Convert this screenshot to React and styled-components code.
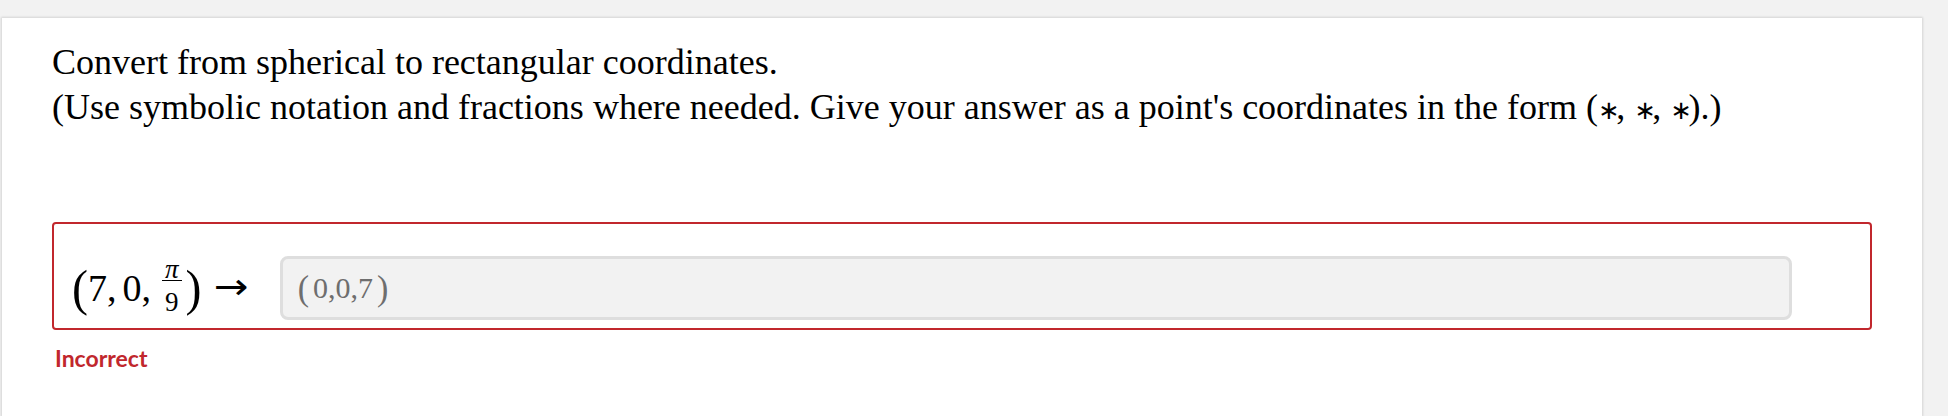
import React from 'react';
import styled, { createGlobalStyle } from 'styled-components';

const GlobalStyle = createGlobalStyle`
  html, body {
    margin: 0;
    padding: 0;
    background: #f2f2f2;
    height: 100%;
    overflow: hidden;
  }
`;

const PageSC = styled.div`
  padding-top: 18px;
  height: 416px;
  box-sizing: border-box;
  overflow: hidden;
`;

const CardSC = styled.div`
  margin: 0 26px 0 2px;
  height: 398px;
  background: #fff;
  box-shadow: 0 0 2px 1px rgba(0, 0, 0, 0.12);
  box-sizing: border-box;
  padding: 22px 50px 0 50px;
`;

const PromptSC = styled.p`
  margin: 0;
  font-family: "Liberation Serif", "Times New Roman", serif;
  font-size: 36px;
  line-height: 45px;
  color: #000;
`;

const StarSC = styled.span`
  display: inline-block;
  text-align: center;
  font-family: "DejaVu Sans", sans-serif;
  font-size: 0.72em;
  width: 0.7em;
  line-height: 1;
`;

const AnswerBoxSC = styled.div`
  margin-top: 92px;
  border: 2px solid #c1272d;
  border-radius: 4px;
  display: flex;
  align-items: center;
  padding: 32px 78px 8px 18px;
`;

const MathSC = styled.span`
  display: inline-flex;
  align-items: center;
  font-family: "Liberation Serif", "Times New Roman", serif;
  font-size: 38px;
  color: #000;
  margin-right: ${(props) => props.gap}px;
`;

const ParenSC = styled.span`
  font-size: ${(props) => props.size || 48}px;
  line-height: 1;
  display: inline-block;
  transform: scaleY(1.05);
  margin: ${(props) => props.gap || '0'};
`;

const TermSC = styled.span`
  margin-right: ${(props) => props.gap || 0}px;
`;

const FracSC = styled.span`
  display: inline-flex;
  flex-direction: column;
  align-items: center;
  font-size: 27px;
  padding: 0 1px;
  margin: 0 3px 0 6px;
  transform: translateY(-1px);

  .num {
    font-style: italic;
    line-height: 0.85;
    padding: 0 3px;
    border-bottom: 1.5px solid #000;
  }

  .den {
    line-height: 1;
    padding-top: 8px;
  }
`;

const ArrowSC = styled.span`
  display: inline-block;
  font-family: "DejaVu Sans", sans-serif;
  font-size: 36px;
  line-height: 1;
  margin-left: 14px;
  transform: translateY(-1px) scaleX(1.15);
`;

const InputSC = styled.div`
  flex: 1;
  height: 64px;
  box-sizing: border-box;
  border: 3px solid #dedede;
  border-radius: 8px;
  background: #f2f2f2;
  display: flex;
  align-items: center;
  padding-left: 15px;
  font-family: "Liberation Serif", "Times New Roman", serif;
  font-size: 30px;
  color: #6e6e6e;
`;

const FeedbackSC = styled.div`
  margin-top: 14px;
  padding-left: 3px;
  font-family: Lato, "Open Sans", sans-serif;
  font-weight: 700;
  font-size: 23px;
  color: #c1272d;
`;

const App = () => (
  <PageSC>
    <GlobalStyle />
    <CardSC>
      <PromptSC>
        Convert from spherical to rectangular coordinates.
        <br />
        (Use symbolic notation and fractions where needed. Give your answer as a point's coordinates in the form (
        <StarSC>∗</StarSC>, <StarSC>∗</StarSC>, <StarSC>∗</StarSC>).)
      </PromptSC>
      <AnswerBoxSC>
        <MathSC gap={34}>
          <ParenSC>(</ParenSC>
          <TermSC gap={6}>7,</TermSC>
          <TermSC gap={4}>0,</TermSC>
          <FracSC>
            <span className="num">π</span>
            <span className="den">9</span>
          </FracSC>
          <ParenSC>)</ParenSC>
          <ArrowSC>→</ArrowSC>
        </MathSC>
        <InputSC>
          <ParenSC size={34} gap="0 4px 0 0">(</ParenSC>
          0,0,7
          <ParenSC size={34} gap="0 0 0 4px">)</ParenSC>
        </InputSC>
      </AnswerBoxSC>
      <FeedbackSC>Incorrect</FeedbackSC>
    </CardSC>
  </PageSC>
);

export default App;
